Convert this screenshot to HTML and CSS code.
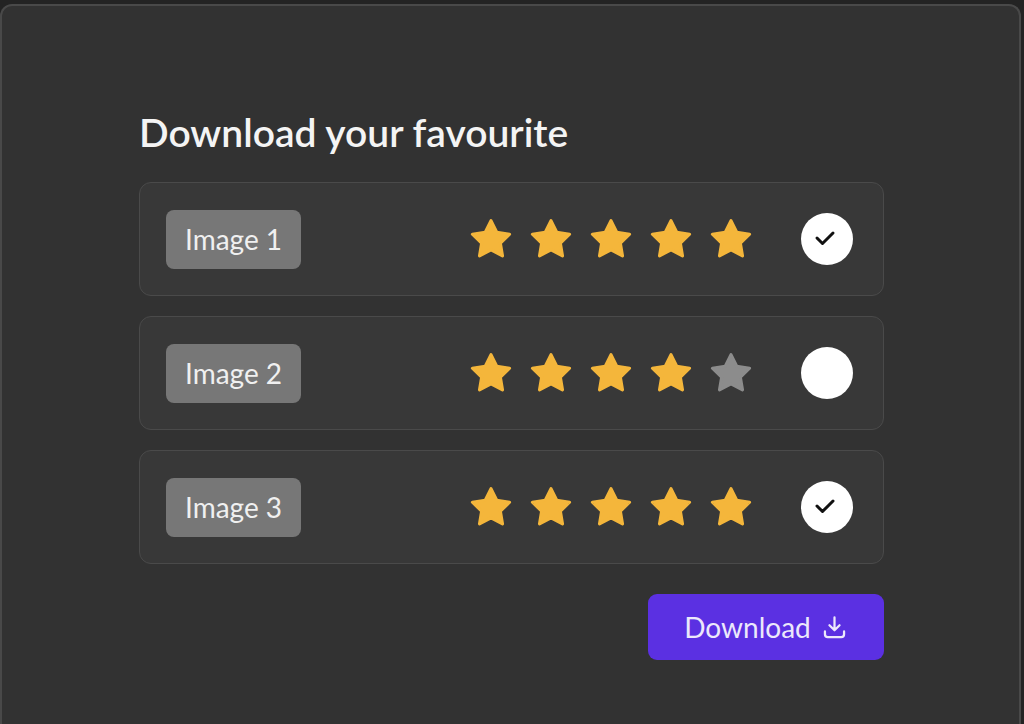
FILE: index.html
```html
<!DOCTYPE html>
<html lang="en">
  <head>
    <meta charset="UTF-8" />
    <meta name="viewport" content="width=device-width, initial-scale=1.0" />
    <title>Download your favourite</title>
    <link rel="stylesheet" href="styles.css">
  </head>
  <body>
    <svg width="0" height="0" class="defs">
      <defs>
        <symbol id="star" viewBox="0 0 24 24">
          <polygon points="12,2.4 15,8.5 21.7,9.5 16.9,14.2 18,20.8 12,17.7 6,20.8 7.1,14.2 2.3,9.5 9,8.5" />
        </symbol>
      </defs>
    </svg>
    <div class="panel">
      <div class="content">
        <h1>Download your favourite</h1>

        <div class="card">
          <span class="chip">Image 1</span>
          <div class="stars">
            <svg class="star on"><use href="#star" /></svg>
            <svg class="star on"><use href="#star" /></svg>
            <svg class="star on"><use href="#star" /></svg>
            <svg class="star on"><use href="#star" /></svg>
            <svg class="star on"><use href="#star" /></svg>
          </div>
          <span class="check checked">
            <svg viewBox="0 0 30 30"><polyline points="5,14 10.5,19.5 21,9" /></svg>
          </span>
        </div>

        <div class="card">
          <span class="chip">Image 2</span>
          <div class="stars">
            <svg class="star on"><use href="#star" /></svg>
            <svg class="star on"><use href="#star" /></svg>
            <svg class="star on"><use href="#star" /></svg>
            <svg class="star on"><use href="#star" /></svg>
            <svg class="star off"><use href="#star" /></svg>
          </div>
          <span class="check"></span>
        </div>

        <div class="card">
          <span class="chip">Image 3</span>
          <div class="stars">
            <svg class="star on"><use href="#star" /></svg>
            <svg class="star on"><use href="#star" /></svg>
            <svg class="star on"><use href="#star" /></svg>
            <svg class="star on"><use href="#star" /></svg>
            <svg class="star on"><use href="#star" /></svg>
          </div>
          <span class="check checked">
            <svg viewBox="0 0 30 30"><polyline points="5,14 10.5,19.5 21,9" /></svg>
          </span>
        </div>

        <div class="actions">
          <button class="download">
            Download
            <svg class="download-icon" viewBox="0 0 24 24">
              <path d="M12 3v11M7.5 10l4.5 4.5 4.5-4.5M3.5 15.5v2.5a2.5 2.5 0 0 0 2.5 2.5h12a2.5 2.5 0 0 0 2.5-2.5v-2.5" />
            </svg>
          </button>
        </div>
      </div>
    </div>
  </body>
</html>
```

FILE: styles.css
```css
html,
body {
  margin: 0;
  padding: 0;
  height: 100%;
  overflow: hidden;
}

body {
  background-color: #232323;
  font-family: Lato, "Noto Sans", sans-serif;
  color: #f2f2f2;
}

.defs {
  position: absolute;
}

/* outer window, its bottom edge is off screen */
.panel {
  margin: 4px 3px 0 0;
  height: calc(100% - 4px);
  background: #323232;
  border: 2px solid #494949;
  border-bottom: none;
  border-radius: 12px 12px 0 0;
  box-sizing: border-box;
}

.content {
  width: 745px;
  margin-left: 137px;
  padding-top: 104px;
}

h1 {
  margin: 0 0 28px;
  font-size: 39px;
  line-height: 44px;
  font-weight: 600;
  color: #f4f4f4;
}

.card {
  display: flex;
  align-items: center;
  height: 114px;
  box-sizing: border-box;
  padding: 0 30px 0 26px;
  margin-bottom: 20px;
  background: #383838;
  border: 1.5px solid #4a4a4a;
  border-radius: 12px;
}

.chip {
  display: flex;
  align-items: center;
  height: 59px;
  padding: 0 19px;
  background: #777777;
  border-radius: 8px;
  font-size: 28px;
  color: #f0f0f0;
}

.stars {
  display: flex;
  gap: 14px;
  margin-left: auto;
  margin-right: 47px;
}

.star {
  width: 46px;
  height: 46px;
  stroke-width: 1.6;
  stroke-linejoin: round;
}

.star.on {
  fill: #f4b63b;
  stroke: #f4b63b;
}

.star.off {
  fill: #8c8c8c;
  stroke: #8c8c8c;
}

.check {
  display: flex;
  align-items: center;
  justify-content: center;
  width: 52px;
  height: 52px;
  border-radius: 50%;
  background: #ffffff;
}

.check svg {
  width: 30px;
  height: 30px;
  fill: none;
  stroke: #111111;
  stroke-width: 3;
  stroke-linecap: round;
  stroke-linejoin: round;
}

.actions {
  display: flex;
  justify-content: flex-end;
  margin-top: 30px;
}

.download {
  display: flex;
  align-items: center;
  justify-content: center;
  gap: 10px;
  height: 66px;
  width: 236px;
  padding: 0;
  background: #5b30e2;
  color: #ece8fb;
  border: none;
  border-radius: 9px;
  font-family: Lato, "Noto Sans", sans-serif;
  font-size: 28px;
  cursor: pointer;
}

.download-icon {
  width: 27px;
  height: 27px;
  fill: none;
  stroke: #ece8fb;
  stroke-width: 2;
  stroke-linecap: round;
  stroke-linejoin: round;
}
```
